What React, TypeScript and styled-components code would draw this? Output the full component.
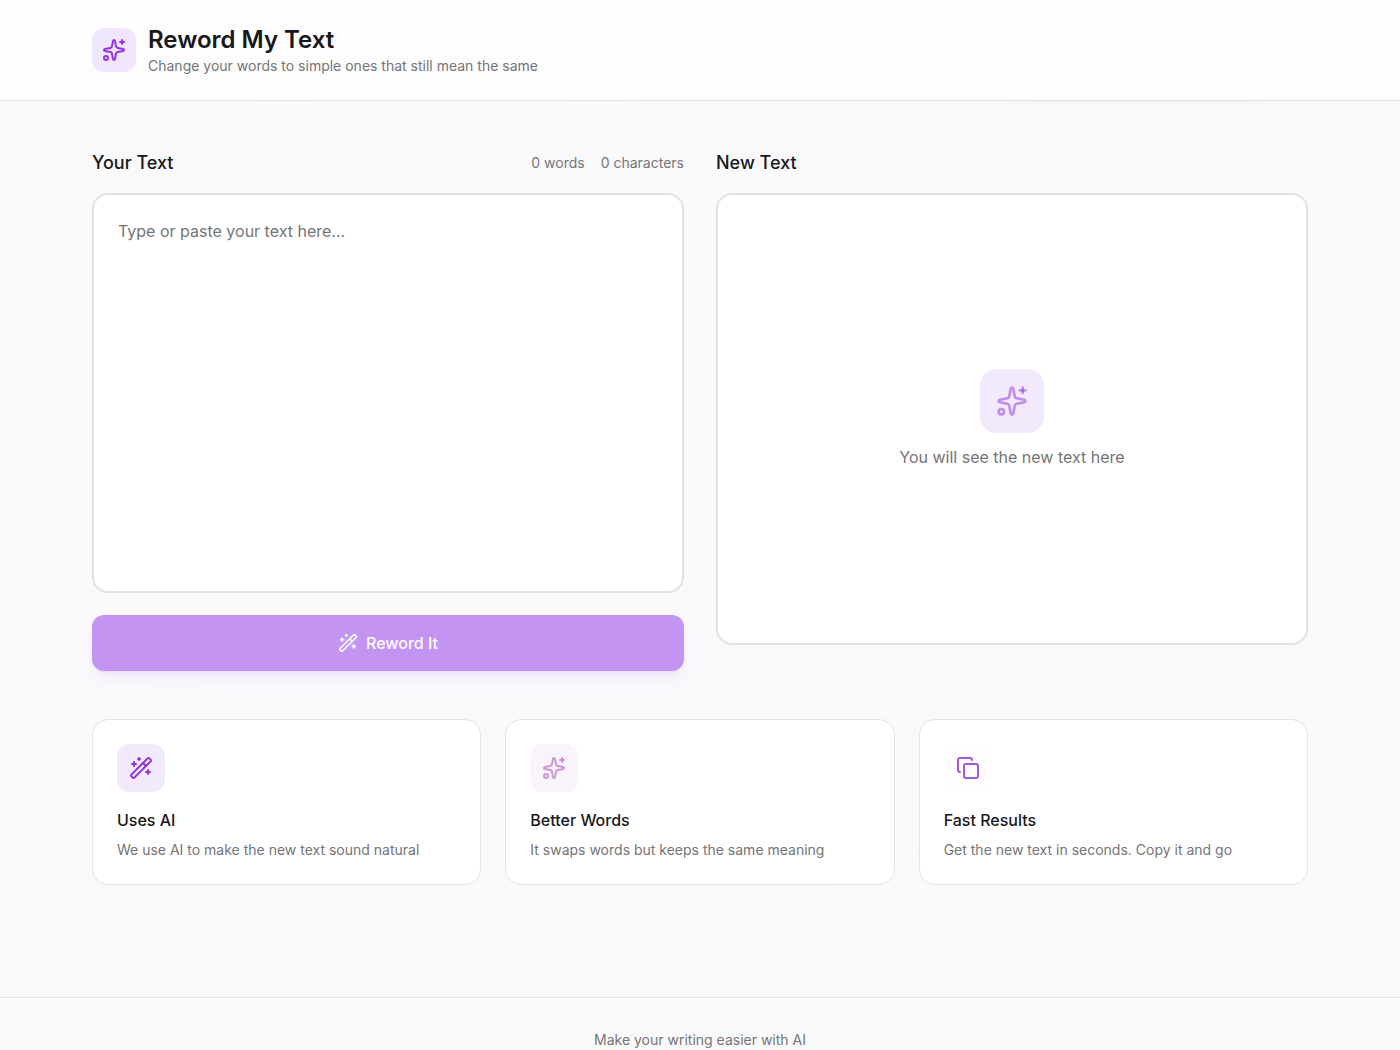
import { useState } from 'react';
import styled, { createGlobalStyle } from 'styled-components';
import { Copy, Sparkles, WandSparkles } from 'lucide-react';

const GlobalStyle = createGlobalStyle`
  *, *::before, *::after { box-sizing: border-box; }
  body {
    margin: 0;
    color: #18181b;
    font-family: Inter, "Liberation Sans", sans-serif;
    font-size: 16px;
    line-height: 24px;
  }
  h1, h2, h3, p { margin: 0; }
`;

const Page = styled.div`
  min-height: 100vh;
  background: linear-gradient(135deg, #fafafa 0%, #f9f9fc 50%, #fafafa 100%);
`;

const Container = styled.div`
  max-width: 1280px;
  margin: 0 auto;
  padding: 0 32px;
`;

const Header = styled.header`
  padding: 24px 0;
  background: #fdfdfd;
  border-bottom: 1px solid #e1e1e5;
`;

const Brand = styled.div`
  display: flex;
  align-items: center;
  gap: 12px;
`;

const IconTile = styled.div<{ $size: number; $radius: number; $bg: string; $color: string }>`
  display: flex;
  align-items: center;
  justify-content: center;
  flex-shrink: 0;
  width: ${(p) => p.$size}px;
  height: ${(p) => p.$size}px;
  border-radius: ${(p) => p.$radius}px;
  background: ${(p) => p.$bg};
  color: ${(p) => p.$color};
`;

const Title = styled.h1`
  font-size: 24px;
  line-height: 32px;
  font-weight: 600;
`;

const SmallText = styled.p`
  color: #757575;
  font-size: 14px;
  line-height: 20px;
`;

const Main = styled.main`
  padding: 48px 0;
`;

const Editor = styled.div`
  display: grid;
  grid-template-columns: repeat(2, minmax(0, 1fr));
  gap: 32px;
  align-items: start;
  margin-bottom: 48px;

  @media (max-width: 900px) {
    grid-template-columns: 1fr;
  }
`;

const Pane = styled.section`
  display: flex;
  flex-direction: column;
  gap: 16px;
`;

const PaneHeader = styled.div`
  display: flex;
  align-items: center;
  justify-content: space-between;
`;

const PaneTitle = styled.h2`
  font-size: 18px;
  line-height: 28px;
  font-weight: 500;
`;

const Counts = styled.div`
  display: flex;
  gap: 16px;
`;

const TextInput = styled.textarea`
  display: block;
  width: 100%;
  height: 400px;
  margin-bottom: 6px;
  padding: 24px;
  border: 2px solid #e1e1e5;
  border-radius: 16px;
  background: #fff;
  color: inherit;
  font: inherit;
  resize: none;

  &::placeholder { color: #757575; opacity: 1; }
  &:focus { outline: none; border-color: #9333ea; }
`;

const RewordButton = styled.button`
  display: flex;
  align-items: center;
  justify-content: center;
  gap: 8px;
  height: 56px;
  border: 0;
  border-radius: 12px;
  background: #8f31ea;
  color: #fff;
  font: inherit;
  font-weight: 500;
  box-shadow: 0 10px 15px -3px rgba(147, 51, 234, 0.12), 0 4px 6px -4px rgba(168, 51, 234, 0.3);
  cursor: pointer;

  &:disabled { opacity: 0.5; cursor: not-allowed; }
`;

const Output = styled.div`
  display: flex;
  flex-direction: column;
  align-items: center;
  justify-content: center;
  gap: 12px;
  min-height: 452px;
  padding: 24px;
  border: 2px solid #e1e1e5;
  border-radius: 16px;
  background: #fff;
`;

const OutputHint = styled.p`
  color: #757575;
`;

const Features = styled.div`
  display: grid;
  grid-template-columns: repeat(3, minmax(0, 1fr));
  gap: 24px;

  @media (max-width: 900px) {
    grid-template-columns: 1fr;
  }
`;

const Card = styled.article`
  padding: 24px;
  border: 1px solid #e4e4e7;
  border-radius: 16px;
  background: #fff;
`;

const CardTitle = styled.h3`
  margin: 16px 0 8px;
  font-size: 16px;
  line-height: 24px;
  font-weight: 500;
`;

const Footer = styled.footer`
  margin-top: 64px;
  padding: 32px 0;
  border-top: 1px solid #e1e1e5;
  text-align: center;
`;

const features = [
  {
    title: 'Uses AI',
    text: 'We use AI to make the new text sound natural',
    Icon: WandSparkles,
    bg: '#f3e9fd',
    color: '#9036d6',
  },
  {
    title: 'Better Words',
    text: 'It swaps words but keeps the same meaning',
    Icon: Sparkles,
    bg: '#f9f4fb',
    color: '#cb95da',
  },
  {
    title: 'Fast Results',
    text: 'Get the new text in seconds. Copy it and go',
    Icon: Copy,
    bg: '#fefcff',
    color: '#a05cd4',
  },
];

export default function App() {
  const [text, setText] = useState('');
  const words = text.trim() ? text.trim().split(/\s+/).length : 0;

  return (
    <Page>
      <GlobalStyle />
      <Header>
        <Container>
          <Brand>
            <IconTile
              $size={44}
              $radius={12}
              $bg="linear-gradient(135deg, #efe6fb, #f2e6fc)"
              $color="#9333ea"
            >
              <Sparkles size={24} />
            </IconTile>
            <div>
              <Title>Reword My Text</Title>
              <SmallText>Change your words to simple ones that still mean the same</SmallText>
            </div>
          </Brand>
        </Container>
      </Header>
      <Main>
        <Container>
          <Editor>
            <Pane>
              <PaneHeader>
                <PaneTitle as="label" htmlFor="source">Your Text</PaneTitle>
                <Counts>
                  <SmallText as="span">{words} words</SmallText>
                  <SmallText as="span">{text.length} characters</SmallText>
                </Counts>
              </PaneHeader>
              <TextInput
                id="source"
                placeholder="Type or paste your text here..."
                value={text}
                onChange={(e) => setText(e.target.value)}
              />
              <RewordButton type="button" disabled={words === 0}>
                <WandSparkles size={20} />
                Reword It
              </RewordButton>
            </Pane>
            <Pane>
              <PaneHeader>
                <PaneTitle>New Text</PaneTitle>
              </PaneHeader>
              <Output>
                <IconTile $size={64} $radius={16} $bg="#f3e9fd" $color="rgba(142, 51, 222, 0.5)">
                  <Sparkles size={32} />
                </IconTile>
                <OutputHint>You will see the new text here</OutputHint>
              </Output>
            </Pane>
          </Editor>
          <Features>
            {features.map(({ title, text: body, Icon, bg, color }) => (
              <Card key={title}>
                <IconTile $size={48} $radius={12} $bg={bg} $color={color}>
                  <Icon size={24} />
                </IconTile>
                <CardTitle>{title}</CardTitle>
                <SmallText>{body}</SmallText>
              </Card>
            ))}
          </Features>
        </Container>
      </Main>
      <Footer>
        <Container>
          <SmallText>Make your writing easier with AI</SmallText>
        </Container>
      </Footer>
    </Page>
  );
}
